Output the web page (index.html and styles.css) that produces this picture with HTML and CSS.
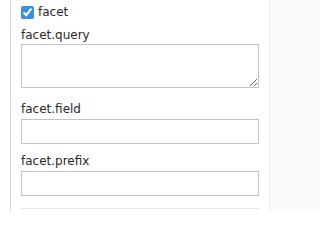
FILE: index.html
```html
<!DOCTYPE html>
<html>
<head>
<meta charset="utf-8">
<link rel="stylesheet" href="styles.css">
</head>
<body>
<div class="page">
  <div class="panel">
    <label class="check"><input type="checkbox" checked><span>facet</span></label>
    <div class="field first">
      <label class="lbl">facet.query</label>
      <textarea class="box area"></textarea>
    </div>
    <div class="field">
      <label class="lbl">facet.field</label>
      <input class="box" type="text">
    </div>
    <div class="field">
      <label class="lbl">facet.prefix</label>
      <input class="box" type="text">
    </div>
    <div class="rule"></div>
  </div>
  <div class="side"></div>
</div>
</body>
</html>
```
FILE: styles.css
```css
html, body {
  margin: 0;
  padding: 0;
  background: #fff;
}
body {
  font-family: "DejaVu Sans", "Liberation Sans", sans-serif;
  font-size: 12px;
  color: #2a2a2a;
}
.page {
  display: flex;
  height: 211px;
  overflow: hidden;
}
.panel {
  margin-left: 10px;
  width: 238px;
  flex: none;
  border-left: 1px solid #d6d6d6;
  border-right: 1px solid #ececec;
  padding: 0 10px;
  display: flex;
  flex-direction: column;
}
.side {
  flex: 1;
  background: #fafafa;
}
.check {
  display: flex;
  align-items: center;
  height: 24px;
}
.check input {
  margin: 0 4px 0 0;
  width: 13px;
  height: 13px;
  accent-color: #3b8ee8;
}
.field {
  display: flex;
  flex-direction: column;
  margin-top: 9px;
}
.field.first {
  margin-top: 3px;
}
.lbl {
  display: block;
  line-height: 16px;
  margin-bottom: 2px;
}
.field.first .lbl {
  margin-bottom: 1px;
}
.box {
  display: block;
  box-sizing: border-box;
  width: 238px;
  height: 25px;
  border: 1px solid #c4c4c4;
  border-radius: 0;
  margin: 0;
  padding: 2px 4px;
  font: inherit;
  background: #fff;
}
.area {
  height: 44px;
  margin-bottom: 4px;
  resize: both;
}
.rule {
  margin-top: 12px;
  height: 1px;
  background: #e6e6e6;
}
```
